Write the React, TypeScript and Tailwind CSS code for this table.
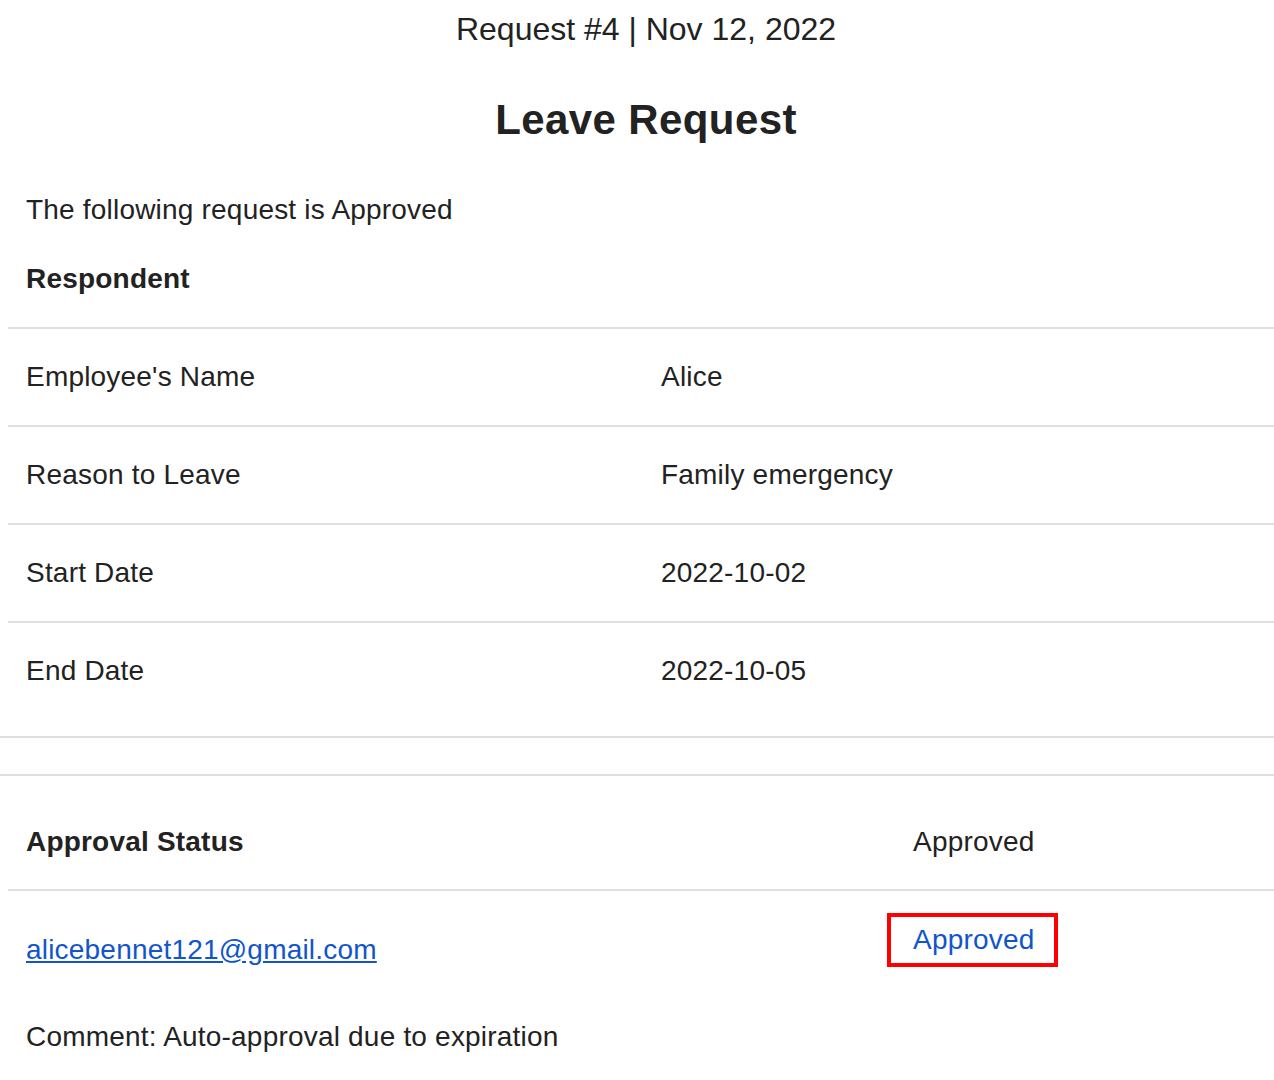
export default function App() {
  // respondent details
  const rows = [
    { label: "Employee's Name", value: 'Alice' },
    { label: 'Reason to Leave', value: 'Family emergency' },
    { label: 'Start Date', value: '2022-10-02' },
    { label: 'End Date', value: '2022-10-05' },
  ];

  return (
    <div className="w-full overflow-hidden bg-white">
      <div className="w-[1292px] text-[#222222] font-['Liberation_Sans',Arial,sans-serif]">
        {/* Header */}
        <div className="pt-[11px] text-center text-[32px] leading-[36px]">Request #4 | Nov 12, 2022</div>
        <h1 className="mt-[49px] text-center text-[42px] leading-[48px] font-bold tracking-[0.4px]">Leave Request</h1>

        <div className="tracking-[0.2px]">
          <p className="mt-[50px] pl-[26px] text-[28px] leading-[32px]">The following request is Approved</p>
          <p className="mt-[37px] pl-[26px] text-[28px] leading-[32px] font-bold">Respondent</p>

          {/* Respondent table */}
          <div className="mt-[32px] ml-[8px] text-[28px] leading-[32px]">
            {rows.map((row, i) => (
              <div key={i} className="flex border-t-2 border-[#e0e0e0] py-[32px]">
                <div className="w-[634px] pl-[18px]">{row.label}</div>
                <div className="flex-1 pl-[19px]">{row.value}</div>
              </div>
            ))}
          </div>

          <div className="mt-[17px] h-[2px] w-full bg-[#e0e0e0]" />
          <div className="mt-[36px] h-[2px] w-full bg-[#e0e0e0]" />

          {/* Approval status */}
          <div className="ml-[8px] text-[28px] leading-[32px]">
            <div className="flex pt-[50px] pb-[31px] border-b-2 border-[#e0e0e0]">
              <div className="w-[879px] pl-[18px] font-bold">Approval Status</div>
              <div className="flex-1 pl-[26px]">Approved</div>
            </div>
            <div className="flex items-start">
              <div className="w-[879px] pl-[18px] pt-[43px]">
                <a href="#" className="text-[#1155cc] underline">alicebennet121@gmail.com</a>
              </div>
              <div className="mt-[22px]">
                <span className="inline-block border-4 border-[#ff0000] pl-[22px] pr-[20px] pt-[7px] pb-[7px] text-[#1155cc]">
                  Approved
                </span>
              </div>
            </div>
          </div>

          <p className="mt-[54px] pl-[26px] text-[28px] leading-[32px]">Comment: Auto-approval due to expiration</p>
        </div>
      </div>
    </div>
  );
}
